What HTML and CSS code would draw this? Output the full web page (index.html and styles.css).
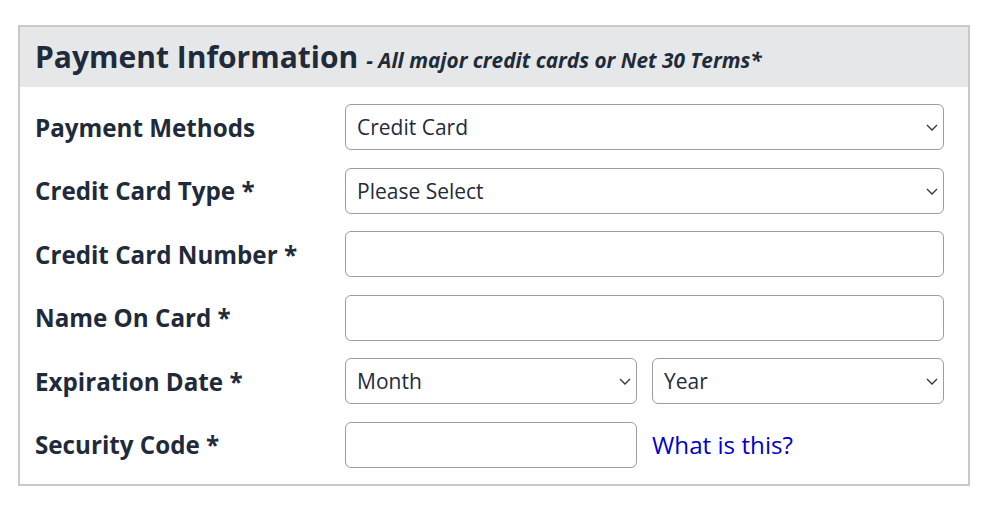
FILE: index.html
```html
<!DOCTYPE html>
<html lang="en">
<head>
  <meta charset="UTF-8">
  <title>Payment Information</title>
  <link rel="stylesheet" href="styles.css">
</head>
<body>
  <div class="panel">
    <div class="panel-head">
      <h2>Payment Information</h2>
      <span class="note">- All major credit cards or Net 30 Terms*</span>
    </div>
    <form class="pay-form">
      <label class="lbl">Payment Methods</label>
      <div class="select-wrap">
        <select><option>Credit Card</option></select>
        <svg class="chev" viewBox="0 0 12 7"><path d="M1 1l5 5 5-5" /></svg>
      </div>

      <label class="lbl">Credit Card Type *</label>
      <div class="select-wrap">
        <select><option>Please Select</option></select>
        <svg class="chev" viewBox="0 0 12 7"><path d="M1 1l5 5 5-5" /></svg>
      </div>

      <label class="lbl">Credit Card Number *</label>
      <input type="text" class="field">

      <label class="lbl">Name On Card *</label>
      <input type="text" class="field">

      <label class="lbl">Expiration Date *</label>
      <div class="pair">
        <div class="select-wrap">
          <select><option>Month</option></select>
          <svg class="chev" viewBox="0 0 12 7"><path d="M1 1l5 5 5-5" /></svg>
        </div>
        <div class="select-wrap">
          <select><option>Year</option></select>
          <svg class="chev" viewBox="0 0 12 7"><path d="M1 1l5 5 5-5" /></svg>
        </div>
      </div>

      <label class="lbl">Security Code *</label>
      <div class="pair">
        <input type="text" class="field">
        <a href="#" class="help">What is this?</a>
      </div>
    </form>
  </div>
</body>
</html>
```

FILE: styles.css
```css
body {
  margin: 0;
  padding: 25px 0 0 18px;
  font-family: "Open Sans", Arial, sans-serif;
  color: #1f2b3a;
  background-color: #fff;
}
.panel {
  width: 948px;
  border: 2px solid #c9c9c9;
}
.panel-head {
  display: flex;
  align-items: baseline;
  height: 60px;
  padding: 0 15px;
  background-color: #e6e7e8;
  box-sizing: border-box;
}
.panel-head h2 {
  margin: 0;
  font-size: 30px;
  line-height: 60px;
  font-weight: 700;
}
.note {
  margin-left: 8px;
  font-size: 20.8px;
  font-weight: 700;
  font-style: italic;
}
.pay-form {
  display: grid;
  grid-template-columns: 310px 599px;
  row-gap: 17.6px;
  align-items: center;
  padding: 17px 24px 16px 15px;
}
.lbl {
  font-size: 24.2px;
  font-weight: 700;
}
.select-wrap {
  position: relative;
}
select,
.field {
  display: block;
  width: 100%;
  height: 46px;
  padding: 0 11px;
  border: 1px solid #9d9d9d;
  border-radius: 6px;
  background-color: #fff;
  font-family: "Open Sans", Arial, sans-serif;
  font-size: 21px;
  color: #1f2b3a;
  box-sizing: border-box;
  appearance: none;
  -webkit-appearance: none;
}
.chev {
  position: absolute;
  right: 6px;
  top: 20px;
  width: 12px;
  height: 7px;
  fill: none;
  stroke: #333;
  stroke-width: 1.3;
  pointer-events: none;
}
.pair {
  display: grid;
  grid-template-columns: 292px 292px;
  column-gap: 15px;
  align-items: center;
}
.help {
  font-size: 24.2px;
  color: #0000cc;
  text-decoration: none;
}
```
